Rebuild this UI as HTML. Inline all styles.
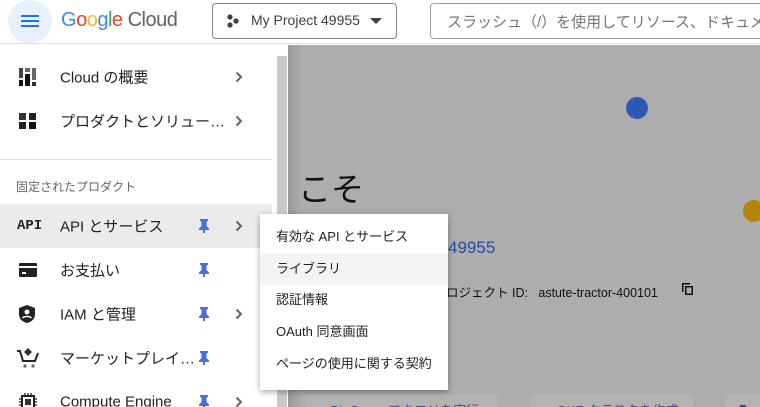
<!DOCTYPE html>
<html><head><meta charset="utf-8"><style>
*{margin:0;padding:0;box-sizing:border-box}
html,body{width:760px;height:407px;overflow:hidden}
body{position:relative;background:#fff;font-family:"Liberation Sans","Noto Sans CJK JP",sans-serif;color:#202124}
.abs{position:absolute}
.hdr{left:0;top:0;width:760px;height:44px;background:#fff;border-bottom:1px solid #dadce0}
.side{left:0;top:45px;width:272px;height:362px;background:#fff}
.row{position:absolute;left:0;width:272px;height:44px;font-size:15px}
.row .t{position:absolute;left:60px;top:50%;transform:translateY(-50%);white-space:nowrap}
.row .ic{position:absolute;left:19px;top:50%;transform:translateY(-50%)}
.chev{position:absolute;left:235px;top:50%;transform:translateY(-50%)}
.pin{position:absolute;left:198px;top:50%;transform:translateY(-50%)}
.menu{left:260px;top:214px;width:188px;height:176px;background:#fff;box-shadow:0 2px 6px rgba(0,0,0,.35);font-size:13px}
.menu div{position:absolute;left:0;width:188px;height:32px;padding-left:16px;line-height:32px;white-space:nowrap}
</style></head><body>
<div class="abs hdr">
 <div class="abs" style="left:8px;top:0;width:44px;height:43px;border-radius:50%;background:#e8f0fe"></div>
 <div class="abs" style="left:21px;top:15px;width:18px;height:2px;background:#1a73e8;box-shadow:0 5px 0 #1a73e8,0 10px 0 #1a73e8"></div>
 <div class="abs" style="left:61px;top:9px;font-size:20px;letter-spacing:-0.5px"><span style="color:#4285f4">G</span><span style="color:#ea4335">o</span><span style="color:#fbbc05">o</span><span style="color:#4285f4">g</span><span style="color:#34a853">l</span><span style="color:#ea4335">e</span> <span style="color:#5f6368">Cloud</span></div>
 <div class="abs" style="left:212px;top:3px;width:185px;height:36px;border:1px solid #80868b;border-radius:4px"></div>
 <svg class="abs" style="left:226px;top:14px" width="14" height="14"><circle cx="4" cy="3" r="2.6" fill="#3c4043"/><circle cx="10" cy="7" r="2.6" fill="#3c4043"/><circle cx="4" cy="11" r="2.6" fill="#3c4043"/></svg>
 <div class="abs" style="left:251px;top:12px;font-size:14px;color:#3c4043">My Project 49955</div>
 <div class="abs" style="left:370px;top:18px;border-left:6px solid transparent;border-right:6px solid transparent;border-top:6px solid #3c4043"></div>
 <div class="abs" style="left:430px;top:3px;width:340px;height:36px;border:1px solid #9aa0a6;border-radius:4px"></div>
 <div class="abs" style="left:447px;top:11px;font-size:15px;color:#70757a;white-space:nowrap">スラッシュ（/）を使用してリソース、ドキュメ</div>
</div>

<div class="abs" style="left:288px;top:45px;width:472px;height:362px;background:#adadad"></div>
<div class="abs" style="left:288px;top:45px;width:14px;height:362px;background:linear-gradient(90deg,#999,#adadad)"></div>
<div class="abs" style="left:626px;top:97px;width:22px;height:22px;border-radius:50%;background:#2f57b4"></div>
<div class="abs" style="left:743px;top:200px;width:22px;height:22px;border-radius:50%;background:#b3860a"></div>
<div class="abs" style="left:298px;top:163px;font-size:33px;color:#111">こそ</div>
<div class="abs" style="left:448px;top:238px;font-size:17px;color:#2b4aa0">49955</div>
<div class="abs" style="left:446px;top:282px;font-size:12.5px;color:#111;white-space:nowrap">ロジェクト ID: &nbsp; astute-tractor-400101</div>
<svg class="abs" style="left:681px;top:282px" width="13" height="13"><path d="M1 1h8v1.5H2.5V10H1z M4 4h8v9H4z M5.5 5.5v6h5v-6z" fill="#111"/></svg>
<div class="abs" style="left:305px;top:394px;width:193px;height:20px;background:#b3b3b3;border-radius:3px"></div>
<div class="abs" style="left:530px;top:394px;width:163px;height:20px;background:#b3b3b3;border-radius:3px"></div>
<div class="abs" style="left:725px;top:394px;width:40px;height:20px;background:#b3b3b3;border-radius:3px"></div>
<div class="abs" style="left:319px;top:400px;font-size:13px;color:#3a4f8f;white-space:nowrap">■ BigQuery でクエリを実行</div>
<div class="abs" style="left:545px;top:400px;font-size:13px;color:#3a4f8f;white-space:nowrap">■ GKE クラスタを作成</div>
<div class="abs" style="left:739px;top:400px;font-size:13px;color:#3a4f8f">■</div>

<div class="abs side">
 <div class="abs" style="left:277px;top:11px;width:10px;height:351px;background:#c9c9c9"></div>
 <div class="row" style="top:10px"><svg class="ic" width="18" height="18"><rect x="0" y="0" width="4" height="10" fill="#444"/><rect x="6" y="0" width="5" height="4" fill="#666"/><rect x="6" y="6" width="5" height="12" fill="#111"/><rect x="13" y="0" width="4" height="12" fill="#666"/><rect x="0" y="12" width="4" height="6" fill="#111"/><rect x="13" y="14" width="4" height="4" fill="#333"/></svg><span class="t">Cloud の概要</span><svg class="chev" width="8" height="12"><path d="M1.5 1.5L6 6l-4.5 4.5" stroke="#5f6368" stroke-width="2" fill="none"/></svg></div>
 <div class="row" style="top:54px"><svg class="ic" width="18" height="18"><rect x="0" y="1" width="7" height="7" fill="#333"/><rect x="10" y="1" width="7" height="7" fill="#222"/><rect x="0" y="10" width="7" height="7" fill="#222"/><rect x="10" y="10" width="7" height="7" fill="#111"/></svg><span class="t">プロダクトとソリュー…</span><svg class="chev" width="8" height="12"><path d="M1.5 1.5L6 6l-4.5 4.5" stroke="#5f6368" stroke-width="2" fill="none"/></svg></div>
 <div class="abs" style="left:0;top:114px;width:272px;height:1px;background:#dadce0"></div>
 <div class="abs" style="left:16px;top:133px;font-size:12px;color:#5f6368">固定されたプロダクト</div>
 <div class="row" style="top:159px;background:#ebebeb"><span class="ic" style="font-family:'Liberation Mono',monospace;font-weight:bold;font-size:14px;left:17px">API</span><span class="t">API とサービス</span><svg class="pin" width="12" height="14"><path d="M2 0h8v1.5L8.5 3v4l2.5 2.5V11H7v3H5v-3H1V9.5L3.5 7V3L2 1.5z" fill="#4a6ee0"/></svg><svg class="chev" width="8" height="12"><path d="M1.5 1.5L6 6l-4.5 4.5" stroke="#5f6368" stroke-width="2" fill="none"/></svg></div>
 <div class="row" style="top:203px"><svg class="ic" width="18" height="14"><rect x="0" y="0" width="18" height="14" rx="1" fill="#222"/><rect x="0" y="3" width="18" height="2" fill="#fff"/><rect x="3" y="9" width="4" height="2" fill="#fff"/></svg><span class="t">お支払い</span><svg class="pin" width="12" height="14"><path d="M2 0h8v1.5L8.5 3v4l2.5 2.5V11H7v3H5v-3H1V9.5L3.5 7V3L2 1.5z" fill="#4a6ee0"/></svg></div>
 <div class="row" style="top:247px"><svg class="ic" width="16" height="18"><path d="M8 0L0 3v6c0 5 3.5 8 8 9 4.5-1 8-4 8-9V3z" fill="#222"/><circle cx="8" cy="7" r="2.5" fill="#fff"/><path d="M3.5 13c1.5-2 7.5-2 9 0" stroke="#fff" stroke-width="1.5" fill="none"/></svg><span class="t">IAM と管理</span><svg class="pin" width="12" height="14"><path d="M2 0h8v1.5L8.5 3v4l2.5 2.5V11H7v3H5v-3H1V9.5L3.5 7V3L2 1.5z" fill="#4a6ee0"/></svg><svg class="chev" width="8" height="12"><path d="M1.5 1.5L6 6l-4.5 4.5" stroke="#5f6368" stroke-width="2" fill="none"/></svg></div>
 <div class="row" style="top:291px"><svg class="ic" width="22" height="22" style="left:17px"><path d="M11 1l4 4-4 4-4-4z" fill="#333"/><path d="M0 4h3l3 10h12l3-8" stroke="#222" stroke-width="2" fill="none"/><circle cx="8" cy="19" r="1.6" fill="#666"/><circle cx="16" cy="19" r="1.6" fill="#666"/></svg><span class="t">マーケットプレイ…</span><svg class="pin" width="12" height="14"><path d="M2 0h8v1.5L8.5 3v4l2.5 2.5V11H7v3H5v-3H1V9.5L3.5 7V3L2 1.5z" fill="#4a6ee0"/></svg></div>
 <div class="row" style="top:335px"><svg class="ic" width="18" height="18"><rect x="3" y="3" width="12" height="12" fill="none" stroke="#222" stroke-width="2"/><rect x="6" y="6" width="6" height="6" fill="#333"/><path d="M6 0v3M9 0v3M12 0v3M6 15v3M9 15v3M12 15v3M0 6h3M0 9h3M0 12h3M15 6h3M15 9h3M15 12h3" stroke="#222" stroke-width="1.3"/></svg><span class="t">Compute Engine</span><svg class="pin" width="12" height="14"><path d="M2 0h8v1.5L8.5 3v4l2.5 2.5V11H7v3H5v-3H1V9.5L3.5 7V3L2 1.5z" fill="#4a6ee0"/></svg><svg class="chev" width="8" height="12"><path d="M1.5 1.5L6 6l-4.5 4.5" stroke="#5f6368" stroke-width="2" fill="none"/></svg></div>
</div>

<div class="abs menu">
 <div style="top:7px">有効な API とサービス</div>
 <div style="top:39px;background:#f3f3f3">ライブラリ</div>
 <div style="top:70px">認証情報</div>
 <div style="top:102px">OAuth 同意画面</div>
 <div style="top:134px">ページの使用に関する契約</div>
</div>
</body></html>
